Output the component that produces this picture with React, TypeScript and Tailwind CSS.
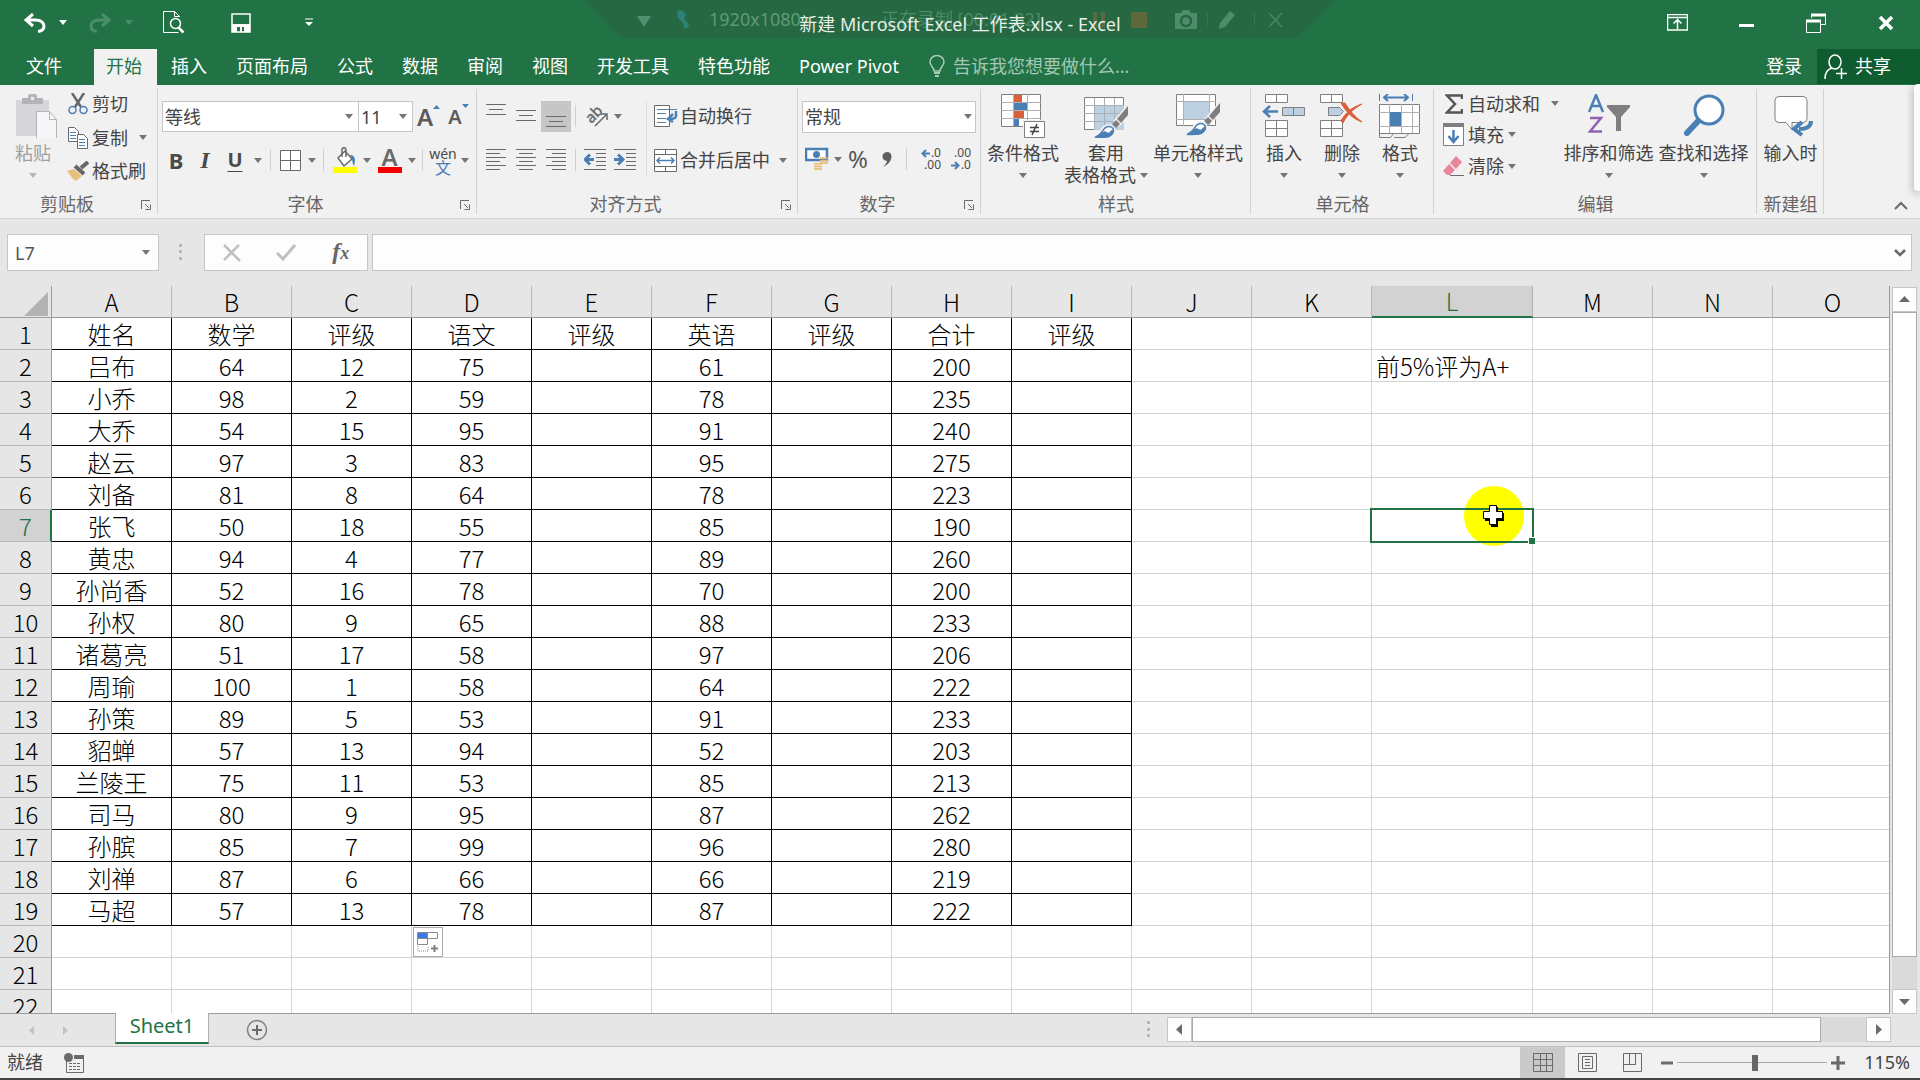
import React from 'react';
import clsx from 'clsx';

const HEADERS = ['姓名', '数学', '评级', '语文', '评级', '英语', '评级', '合计', '评级'];

const STUDENTS: (string | number)[][] = [
  ['吕布', 64, 12, 75, '', 61, '', 200, ''],
  ['小乔', 98, 2, 59, '', 78, '', 235, ''],
  ['大乔', 54, 15, 95, '', 91, '', 240, ''],
  ['赵云', 97, 3, 83, '', 95, '', 275, ''],
  ['刘备', 81, 8, 64, '', 78, '', 223, ''],
  ['张飞', 50, 18, 55, '', 85, '', 190, ''],
  ['黄忠', 94, 4, 77, '', 89, '', 260, ''],
  ['孙尚香', 52, 16, 78, '', 70, '', 200, ''],
  ['孙权', 80, 9, 65, '', 88, '', 233, ''],
  ['诸葛亮', 51, 17, 58, '', 97, '', 206, ''],
  ['周瑜', 100, 1, 58, '', 64, '', 222, ''],
  ['孙策', 89, 5, 53, '', 91, '', 233, ''],
  ['貂蝉', 57, 13, 94, '', 52, '', 203, ''],
  ['兰陵王', 75, 11, 53, '', 85, '', 213, ''],
  ['司马', 80, 9, 95, '', 87, '', 262, ''],
  ['孙膑', 85, 7, 99, '', 96, '', 280, ''],
  ['刘禅', 87, 6, 66, '', 66, '', 219, ''],
  ['马超', 57, 13, 78, '', 87, '', 222, ''],
];

const ROWS = [HEADERS, ...STUDENTS];
const COLUMNS = 'ABCDEFGHIJKLMNO'.split('');
const ROW_COUNT = 22;
const TABS = ['插入', '页面布局', '公式', '数据', '审阅', '视图', '开发工具', '特色功能', 'Power Pivot'];

const GRAY = '#6a6a6a';
const BLUE = '#4a7fb5';

interface IconProps {
  w: number;
  h: number;
  children: React.ReactNode;
  className?: string;
}

const Icon: React.FC<IconProps> = ({ w, h, children, className }) => (
  <svg width={w} height={h} viewBox={`0 0 ${w} ${h}`} fill="none" className={clsx('shrink-0', className)} aria-hidden="true">
    {children}
  </svg>
);

const Caret: React.FC<{ color?: string; className?: string }> = ({ color = '#757575', className }) => (
  <Icon w={8} h={5} className={className}>
    <path d="M0 0h8L4 5z" fill={color} />
  </Icon>
);

const CaretButton: React.FC<{ label: string; className?: string }> = ({ label, className }) => (
  <button aria-label={label} className={clsx('flex h-7 items-center justify-center', className ?? 'w-3')}>
    <Caret />
  </button>
);

const Separator: React.FC = () => (
  <div className="flex w-[9px] justify-center">
    <div className="h-[22px] w-px bg-[#d0d0d0]" />
  </div>
);

/* horizontal text lines used by all the alignment buttons */
const Lines: React.FC<{ lines: [number, number][]; start: number; step: number }> = ({ lines, start, step }) => (
  <Icon w={20} h={24}>
    {lines.map(([a, b], i) => (
      <path key={i} d={`M${a} ${start + i * step + 0.5}H${b}`} stroke={GRAY} />
    ))}
  </Icon>
);

interface GroupProps {
  title: string;
  width: string;
  launcher?: boolean;
  children: React.ReactNode;
}

const Group: React.FC<GroupProps> = ({ title, width, launcher, children }) => (
  <section className={clsx('relative flex shrink-0 flex-col', width)}>
    <div className="flex h-[106px]">{children}</div>
    <div className={clsx('flex h-7 items-center justify-center text-[#666]', launcher && 'pr-6')}>{title}</div>
    {launcher && (
      <button aria-label={`${title}设置`} className="absolute right-[7px] bottom-2">
        <Icon w={10} h={10}>
          <path d="M.5 9V.5H9M4 4l4 4M9.500 4.500v5h-5" stroke={GRAY} />
        </Icon>
      </button>
    )}
    <div className="absolute top-1 right-0 bottom-1 w-px bg-[#d2d2d2]" />
  </section>
);

interface BigButtonProps {
  lines: string[];
  width: string;
  icon: React.ReactNode;
  disabled?: boolean;
  noCaret?: boolean;
}

const BigButton: React.FC<BigButtonProps> = ({ lines, width, icon, disabled, noCaret }) => (
  <button
    disabled={disabled}
    className={clsx('flex shrink-0 flex-col items-center pt-[9px] whitespace-nowrap', width, disabled && 'text-[#a0a0a0]')}
  >
    {icon}
    <span className="mt-1">{lines[0]}</span>
    <span className="flex h-[22px] items-center gap-1">
      {lines[1]}
      {!noCaret && <Caret color={disabled ? '#b5b5b5' : undefined} />}
    </span>
  </button>
);

const SmallButton: React.FC<{ label: string; icon: React.ReactNode; caret?: string }> = ({ label, icon, caret }) => (
  <button className="flex h-full items-center gap-[3px] whitespace-nowrap">
    <span className="flex w-[23px] justify-center">{icon}</span>
    {label}
    {caret && <Caret className={caret} />}
  </button>
);

const Brush: React.FC = () => (
  <>
    <path d="M45 9v13L35 33l-6-6z" fill="#f0f0f0" />
    <path d="M44 12v9l-7 8-4-4z" fill="#7f7f7f" />
    <path d="M32 26l4 4-4 4-4-4z" fill="#7f7f7f" />
    <path d="M11 44c4-2 5-4 7-8 2-4 7-6 10-3 4 3 2 8-3 10-4 2-9 1-14 1z" fill="#f0f0f0" stroke="#f0f0f0" strokeWidth="3" />
    <path d="M11 43.500c5-2 6-4 8-7 2-4 6-5 9-3 3 3 1 7-3 9-4 1-9 1-14 1z" fill="#fff" stroke={BLUE} strokeWidth="1.500" />
    <path d="M11 43.500c5-2 6-5 9-6 2-1 3 2 5 1s3-4 4-2-1 4-4 6c-4 2-9 1-14 1z" fill={BLUE} />
  </>
);

const TitleBar: React.FC = () => (
  <header className="relative flex h-[49px] items-center justify-between">
    <div className="absolute inset-x-0 top-0 flex justify-center overflow-hidden">
      <div className="relative flex h-[38px] w-[750px] items-center text-[#5f9a79]">
        <svg viewBox="0 0 750 38" className="absolute inset-0 h-full w-full" aria-hidden="true">
          <path d="M0 0h750l-38 37.500H35z" fill="#256842" />
          <path d="M52 16h14l-7 11z" fill="#4f9270" />
          <path d="M92 11l5-1 4 4-2 5 5 5-1 4h-4l-1-5-5-5z" fill="#2c8276" />
          <path d="M508 12h4v16h-4zM516 12h4v16h-4z" fill="#5b6a3d" />
          <path d="M546 12h16v16h-16z" fill="#5f683c" />
          <path d="M590 13h6l2-3h6l2 3h6v16h-22z" fill="#4f8c6b" />
          <circle cx="601" cy="21" r="5" fill="#4f8c6b" stroke="#256842" strokeWidth="2.500" />
          <path d="M634 29l1-6 10-12 5 4-10 12z" fill="#4f8c6b" />
          <path d="M622.500 13v13M669.500 13v13" stroke="#347650" />
          <path d="M684 13l13 14M697 13l-13 14" stroke="#468663" strokeWidth="1.500" />
        </svg>
        <span className="relative ml-[124px]">1920x1080</span>
        <span className="relative ml-20 text-[#4c8a68]">正在录制 [00:01:32]</span>
      </div>
    </div>
    <h1 className="absolute inset-x-0 top-[13px] text-center text-[#e6efe9]">新建 Microsoft Excel 工作表.xlsx - Excel</h1>

    <div className="relative flex items-center pl-6 pb-1">
      <button aria-label="撤消">
        <Icon w={22} h={20}>
          <path d="M2 7h10c5 0 8 3 8 6s-2 5-6 5.500M9 1L2 7l7 6" stroke="#fff" strokeWidth="3" />
        </Icon>
      </button>
      <button aria-label="撤消列表" className="ml-[13px]">
        <Caret color="#fff" />
      </button>
      <button aria-label="恢复" className="ml-[22px]" disabled>
        <Icon w={22} h={20}>
          <path d="M20 7H10c-5 0-8 3-8 6s2 5 6 5.500M13 1l7 6-7 6" stroke="#4b8f69" strokeWidth="3" />
        </Icon>
      </button>
      <button aria-label="恢复列表" className="ml-3.5" disabled>
        <Caret color="#4b8f69" />
      </button>
      <button aria-label="打印预览" className="ml-[30px]">
        <Icon w={22} h={23}>
          <path d="M16.500 6V5.500L11.500.5H.5v21h15M11.500.5v5h5" stroke="#fff" />
          <circle cx="12.500" cy="12.500" r="5" stroke="#fff" strokeWidth="1.500" />
          <path d="M15.500 16.500l5 5" stroke="#fff" strokeWidth="2.500" />
        </Icon>
      </button>
      <button aria-label="保存" className="ml-[46px]">
        <Icon w={20} h={20}>
          <path d="M1 1h18v18H1z" stroke="#fff" strokeWidth="1.500" />
          <path d="M1 11h18v8h-6v-5h-2v5H9v-5H6v5H1z" fill="#fff" />
        </Icon>
      </button>
      <button aria-label="自定义快速访问工具栏" className="ml-[54px]">
        <Icon w={8} h={9}>
          <path d="M0 1h8" stroke="#fff" />
          <path d="M0 4h8L4 8z" fill="#fff" />
        </Icon>
      </button>
    </div>

    <div className="relative flex items-center pr-[26px] pb-1">
      <button aria-label="功能区显示选项" className="mr-[51px]">
        <Icon w={21} h={17}>
          <path d="M.5.5h20v15.500H.5zM.5 3.500h20M10.500 15V6M6.500 9.500l4-4 4 4" stroke="#fff" strokeWidth="1.500" />
        </Icon>
      </button>
      <button aria-label="最小化" className="mr-[52px]">
        <Icon w={15} h={8}>
          <path d="M0 6.500h15" stroke="#fff" strokeWidth="3" />
        </Icon>
      </button>
      <button aria-label="向下还原" className="mr-[52px]">
        <Icon w={20} h={20}>
          <path d="M5.500 5V1.500h14v10H15M.5 8.500h14v11H.5z" stroke="#fff" />
          <path d="M5 2h15M0 8h15" stroke="#fff" strokeWidth="3" />
        </Icon>
      </button>
      <button aria-label="关闭">
        <Icon w={16} h={16}>
          <path d="M2 2l12 12M14 2L2 14" stroke="#fff" strokeWidth="3.500" />
        </Icon>
      </button>
    </div>
  </header>
);

const TabBar: React.FC = () => (
  <nav className="flex h-9 items-stretch whitespace-nowrap text-white">
    <button className="w-[94px] pr-1.5 pb-0.5">文件</button>
    <button className="bg-[#f1f1f1] pr-[15px] pb-0.5 pl-3 text-[#217346]">开始</button>
    <div className="flex gap-px">
      {TABS.map((tab) => (
        <button key={tab} className="px-3.5 pb-0.5">
          {tab}
        </button>
      ))}
    </div>
    <label className="ml-4 flex flex-1 items-center gap-2 pb-0.5">
      <Icon w={16} h={22}>
        <path d="M5 16c0-4-4-5-4-9a7 6.500 0 0114 0c0 4-4 5-4 9z" stroke="#a9cbb8" strokeWidth="1.500" />
        <path d="M5 18h6M6 21h4" stroke="#a9cbb8" strokeWidth="2" />
      </Icon>
      <input
        aria-label="告诉我您想要做什么"
        placeholder="告诉我您想要做什么..."
        className="w-60 bg-transparent outline-none placeholder:text-[#a3c7b2]"
      />
    </label>
    <button className="px-[15px] pb-0.5">登录</button>
    <button className="mb-px flex w-[103px] items-center gap-2 bg-[#0e5c2f] pb-px pl-[7px]">
      <Icon w={23} h={25}>
        <ellipse cx="11" cy="8" rx="6" ry="7" stroke="#fff" strokeWidth="1.500" />
        <path d="M1 25c0-6 3-10 7-11M12 19.500h11M17.500 14v11" stroke="#fff" strokeWidth="1.500" />
      </Icon>
      共享
    </button>
  </nav>
);

const ClipboardGroup: React.FC = () => (
  <Group title="剪贴板" width="w-[158px]" launcher>
    <BigButton
      lines={['粘贴']}
      width="w-[66px]"
      disabled
      icon={
        <Icon w={42} h={44} className="ml-2">
          <path d="M0 6h33v36H0z" fill="#d6d6da" />
          <path d="M6 10V4h6V2a2 2 0 012-2h5a2 2 0 012 2v2h6v6z" fill="#b4b4b8" />
          <path d="M15 3h3v3h-3z" fill="#f0f0f0" />
          <path d="M20.500 17.500h13l7 8v19h-20z" fill="#f8f6f8" stroke="#b4b4b8" />
          <path d="M33.500 17.500v8h7" stroke="#b4b4b8" />
        </Icon>
      }
    />
    <div className="grid h-full grid-rows-3 pt-0.5 pb-0.5">
      <SmallButton
        label="剪切"
        icon={
          <Icon w={20} h={22}>
            <path d="M4 0l9 14M16 0L7 14" stroke="#666" strokeWidth="2.500" />
            <circle cx="4.500" cy="17" r="3.500" stroke={BLUE} strokeWidth="1.500" />
            <circle cx="15.500" cy="17" r="3.500" stroke={BLUE} strokeWidth="1.500" />
          </Icon>
        }
      />
      <SmallButton
        label="复制"
        caret="ml-2"
        icon={
          <Icon w={20} h={22}>
            <path d="M.5.5h6l4 4v10H.5z" fill="#fff" stroke={GRAY} />
            <path d="M2 5.500h6M2 8.500h6M2 11.500h6" stroke={BLUE} />
            <path d="M9.500 7.500h6l4 4v10h-10z" fill="#fff" stroke={GRAY} />
            <path d="M11 12.500h6M11 15.500h6M11 18.500h6" stroke={BLUE} />
          </Icon>
        }
      />
      <SmallButton
        label="格式刷"
        icon={
          <Icon w={22} h={20}>
            <path d="M0 10l7-2 8 7-6 5-3-2z" fill="#e8c07d" />
            <path d="M8 5l9 8" stroke="#666" strokeWidth="4" />
            <path d="M14 7l7-6" stroke="#666" strokeWidth="4" />
          </Icon>
        }
      />
    </div>
  </Group>
);

const FontGroup: React.FC = () => (
  <Group title="字体" width="w-[319px]" launcher>
    <div className="flex flex-col gap-3 pt-4 pl-1">
      <div className="flex items-center">
        <div className="relative">
          <select aria-label="字体" className="h-[31px] w-[197px] appearance-none border border-[#c6c6c6] bg-white pl-0.5">
            <option>等线</option>
          </select>
          <Caret className="pointer-events-none absolute top-[13px] right-1.5" />
        </div>
        <div className="relative">
          <select aria-label="字号" className="h-[31px] w-[54px] appearance-none border border-l-0 border-[#c6c6c6] bg-white pl-0.5">
            <option>11</option>
          </select>
          <Caret className="pointer-events-none absolute top-[13px] right-1.5" />
        </div>
        <button aria-label="增大字号" className="ml-1 flex items-start">
          <span className="text-2xl leading-6 font-semibold text-[#5c5c5c]">A</span>
          <Icon w={7} h={4}>
            <path d="M0 4h7L3.500 0z" fill={BLUE} />
          </Icon>
        </button>
        <button aria-label="减小字号" className="ml-2 flex items-start">
          <span className="pt-px text-xl leading-6 font-semibold text-[#5c5c5c]">A</span>
          <Icon w={7} h={4}>
            <path d="M0 0h7L3.500 4z" fill={BLUE} />
          </Icon>
        </button>
      </div>
      <div className="flex items-center">
        <button className="w-7 text-[22px] font-bold text-[#4a4a4a]">B</button>
        <button className="w-[30px] font-['Liberation_Serif',serif] text-[24px] font-bold text-[#4a4a4a] italic">I</button>
        <button className="w-[30px] text-xl font-bold text-[#4a4a4a] underline decoration-1 underline-offset-4">U</button>
        <CaretButton label="下划线样式" className="w-4" />
        <Separator />
        <button aria-label="边框" className="flex w-[30px] justify-center">
          <Icon w={21} h={21}>
            <path d="M.5.5h20v20H.5zM10.500 0v21M0 10.500h21" fill="#fff" stroke={GRAY} />
          </Icon>
        </button>
        <CaretButton label="边框样式" className="w-3.5" />
        <Separator />
        <button aria-label="填充颜色" className="flex w-[33px] justify-center">
          <Icon w={24} h={26}>
            <path d="M5 11l7-7 7 8-8 7z" fill="#fff" stroke={GRAY} strokeWidth="1.500" />
            <path d="M9 10V3c0-3 4-3 4 0v7" stroke={GRAY} strokeWidth="1.500" />
            <path d="M17 8c5 0 6 4 4 11-2-3-1-7-4-11z" fill={BLUE} />
            <path d="M0 20h24v6H0z" fill="#ff0" />
          </Icon>
        </button>
        <CaretButton label="填充颜色列表" />
        <button aria-label="字体颜色" className="flex w-[33px] flex-col items-center">
          <span className="text-2xl leading-5 font-semibold text-[#6a6a6a]">A</span>
          <span className="h-1.5 w-6 bg-[#f00000]" />
        </button>
        <CaretButton label="字体颜色列表" />
        <Separator />
        <button aria-label="拼音指南" className="flex w-8 flex-col items-center pt-1">
          <span className="text-sm leading-3 text-[#4a4a4a]">wén</span>
          <span className="text-base leading-4 text-[#4a7fb5]">文</span>
        </button>
        <CaretButton label="拼音选项" />
      </div>
    </div>
  </Group>
);

const AlignGroup: React.FC = () => (
  <Group title="对齐方式" width="w-[321px]" launcher>
    <div className="grid h-[97px] w-[165px] grid-rows-2 pt-[9px] pl-1">
      <div className="flex items-center">
        <button aria-label="顶端对齐" className="flex w-[30px] justify-center">
          <Lines lines={[[0, 20], [3, 17], [0, 20]]} start={0} step={5} />
        </button>
        <button aria-label="垂直居中" className="flex w-[30px] justify-center">
          <Lines lines={[[0, 20], [3, 17], [0, 20]]} start={6} step={5} />
        </button>
        <button aria-label="底端对齐" className="flex h-[31px] w-[30px] items-center justify-center bg-[#c6c6c6]">
          <Lines lines={[[0, 20], [3, 17], [0, 20]]} start={12} step={5} />
        </button>
        <Separator />
        <button aria-label="方向" className="ml-1 flex w-7 justify-center">
          <Icon w={24} h={22}>
            <text x="1" y="15" fontSize="15" fill={GRAY} stroke={GRAY} strokeWidth=".5" transform="rotate(-45 8 12)">
              ab
            </text>
            <path d="M9 21L20 10M15 9h6v6" stroke={GRAY} strokeWidth="1.500" />
          </Icon>
        </button>
        <CaretButton label="方向列表" />
      </div>
      <div className="flex items-center">
        <button aria-label="左对齐" className="flex w-[30px] justify-center">
          <Lines lines={[[0, 20], [0, 14], [0, 20], [0, 14], [0, 20], [0, 14]]} start={1} step={4} />
        </button>
        <button aria-label="居中" className="flex w-[30px] justify-center">
          <Lines lines={[[0, 20], [3, 17], [0, 20], [3, 17], [0, 20], [3, 17]]} start={1} step={4} />
        </button>
        <button aria-label="右对齐" className="flex w-[30px] justify-center">
          <Lines lines={[[0, 20], [6, 20], [0, 20], [6, 20], [0, 20], [6, 20]]} start={1} step={4} />
        </button>
        <Separator />
        <button aria-label="减少缩进量" className="flex w-[30px] justify-center">
          <Icon w={22} h={22}>
            <path d="M0 .5h22M12 4.500h10M12 8.500h10M12 12.500h10M12 16.500h10M0 20.500h22" stroke={GRAY} />
            <path d="M2 10.500h8M6 5.500l-5 5 5 5" stroke={BLUE} strokeWidth="3" />
          </Icon>
        </button>
        <button aria-label="增加缩进量" className="flex w-[30px] justify-center">
          <Icon w={22} h={22}>
            <path d="M0 .5h22M12 4.500h10M12 8.500h10M12 12.500h10M12 16.500h10M0 20.500h22" stroke={GRAY} />
            <path d="M0 10.500h8M4 5.500l5 5-5 5" stroke={BLUE} strokeWidth="3" />
          </Icon>
        </button>
      </div>
    </div>
    <div className="mt-4 ml-1 h-[76px] w-px bg-[#dedede]" />
    <div className="grid h-[97px] grid-rows-2 pt-[9px] pl-[7px]">
      <SmallButton
        label="自动换行"
        icon={
          <Icon w={24} h={23}>
            <path d="M.5.5h15v21H.5z" fill="#fff" stroke={GRAY} />
            <path d="M3 4.500h20M3 8.500h9M3 13.500h9M3 17.500h9" stroke="#5f7f9f" />
            <path d="M22 6v5c0 2-2 3-7 3M19 9l-5 5 5 3" stroke={BLUE} strokeWidth="2.500" />
          </Icon>
        }
      />
      <SmallButton
        label="合并后居中"
        caret="ml-1.5"
        icon={
          <Icon w={23} h={23}>
            <path d="M.5.5h22v22H.5zM.5 5.500h22M.5 17.500h22M11.500 0v5M11.500 18v5" fill="#fff" stroke={GRAY} />
            <path d="M3 11.500h17M6 8.500l-3 3 3 3M17 8.500l3 3-3 3" stroke={BLUE} strokeWidth="1.500" />
          </Icon>
        }
      />
    </div>
  </Group>
);

const NumberGroup: React.FC = () => (
  <Group title="数字" width="w-[183px]" launcher>
    <div className="flex w-[178px] flex-col gap-3 pt-4 pl-1">
      <div className="relative">
        <select aria-label="数字格式" className="h-8 w-full appearance-none border border-[#c6c6c6] bg-white pl-0.5">
          <option>常规</option>
        </select>
        <Caret className="pointer-events-none absolute top-[13px] right-1" />
      </div>
      <div className="flex items-center">
        <button aria-label="会计数字格式" className="flex w-[30px] shrink-0 justify-center">
          <Icon w={24} h={24}>
            <path d="M1 2h21v11H1z" fill="#fff" stroke={BLUE} strokeWidth="2.500" />
            <circle cx="11.500" cy="7.500" r="3.500" fill={BLUE} />
            <path d="M15 11h8M15 13.500h8M15 16h8M9 17h8M9 19.500h8M9 22h8" stroke="#e8b86a" strokeWidth="1.500" />
          </Icon>
        </button>
        <CaretButton label="货币列表" />
        <button className="w-7 shrink-0 text-[24px] leading-7 text-[#555]">%</button>
        <button aria-label="千位分隔样式" className="flex w-[30px] shrink-0 justify-center">
          <Icon w={10} h={15}>
            <path d="M5 0c7 0 6 11-4 15 3-3 4-5 4-6C-1 9-1 0 5 0z" fill="#5f5f5f" />
          </Icon>
        </button>
        <Separator />
        <button aria-label="增加小数位数" className="flex w-[30px] shrink-0 flex-col items-end text-xs leading-3 text-[#4a4a4a]">
          <span className="flex items-center gap-px">
            <Icon w={9} h={9}>
              <path d="M1 4.500h8M5 1L1.500 4.500 5 8" stroke={BLUE} strokeWidth="2" />
            </Icon>
            .0
          </span>
          <span>.00</span>
        </button>
        <button aria-label="减少小数位数" className="flex w-[30px] shrink-0 flex-col items-end text-xs leading-3 text-[#4a4a4a]">
          <span>.00</span>
          <span className="flex items-center gap-px">
            <Icon w={9} h={9}>
              <path d="M0 4.500h8M4 1l3.500 3.500L4 8" stroke={BLUE} strokeWidth="2" />
            </Icon>
            .0
          </span>
        </button>
      </div>
    </div>
  </Group>
);

const StylesGroup: React.FC = () => (
  <Group title="样式" width="w-[270px]">
    <BigButton
      lines={['条件格式']}
      width="ml-0.5 w-20"
      icon={
        <Icon w={44} h={44}>
          <path d="M.5.5h39v32H.5z" fill="#fff" stroke="#7f7f7f" />
          <path d="M0 8.500h40M0 16.500h40M0 24.500h40M12.500 0v32M26.500 0v32" stroke="#b0b0b0" />
          <path d="M13 1h8v7h-8zM13 17h10v7H13z" fill="#d9603b" />
          <path d="M13 9h13v7H13zM13 25h5v7h-5z" fill={BLUE} />
          <path d="M22 26h22v18H22z" fill="#f0f0f0" />
          <path d="M23.500 27.500h20v16h-20z" fill="#fff" stroke="#7f7f7f" />
          <path d="M29 33.500h9M29 37.500h9M36 30l-5 11" stroke="#444" strokeWidth="1.500" />
        </Icon>
      }
    />
    <BigButton
      lines={['套用', '表格格式']}
      width="w-[86px]"
      icon={
        <Icon w={45} h={44}>
          <path d="M.5 3.500h39v32H.5z" fill="#fff" stroke="#7f7f7f" />
          <path d="M10 12h30v24H10z" fill="#bdd0e2" />
          <path d="M0 11.500h40M0 19.500h40M0 27.500h40M10.500 4v32M20.500 4v32M30.500 4v32" stroke="#a8b0b8" />
          <Brush />
        </Icon>
      }
    />
    <BigButton
      lines={['单元格样式']}
      width="w-[98px]"
      icon={
        <Icon w={45} h={44}>
          <path d="M.5.5h39v31H.5z" fill="#fff" stroke="#7f7f7f" />
          <path d="M0 7.500h40M0 25.500h40M7.500 0v32M33.500 0v32" stroke="#b0b0b0" />
          <path d="M8 8h25v17H8z" fill="#bdd0e2" />
          <g transform="translate(0 -3)">
            <Brush />
          </g>
        </Icon>
      }
    />
  </Group>
);

const CellsGroup: React.FC = () => (
  <Group title="单元格" width="w-[183px]">
    <BigButton
      lines={['插入']}
      width="ml-1 w-[58px]"
      icon={
        <Icon w={44} h={44}>
          <path d="M3.500.5h22v8h-22zM14.500 0v9M3.500 26.500h22v16h-22zM3.500 34.500h22M14.500 26v17" fill="#fff" stroke="#7f7f7f" />
          <path d="M20.500 13.500h22v8h-22zM31.500 13v9" fill="#bdd0e2" stroke="#7f7f7f" />
          <path d="M2 17.500h14M8 12l-6 5.500 6 5.500" stroke={BLUE} strokeWidth="2.500" />
        </Icon>
      }
    />
    <BigButton
      lines={['删除']}
      width="w-[58px]"
      icon={
        <Icon w={44} h={44}>
          <path d="M.5.5h22v8H.5zM11.500 0v9M.5 26.500h22v16H.5zM.5 34.500h22M11.500 26v17" fill="#fff" stroke="#7f7f7f" />
          <path d="M8.500 13.500h11l4 4-4 4h-11z" fill="#bdd0e2" stroke="#7f7f7f" />
          <path d="M21 9l4 0c5 8 10 14 17 19-9-3-16-10-21-19z" fill="#d9603b" stroke="#d9603b" />
          <path d="M42 10C33 15 27 21 23 29l-2-2c4-8 11-14 21-17z" fill="#d9603b" stroke="#d9603b" />
        </Icon>
      }
    />
    <BigButton
      lines={['格式']}
      width="w-[58px]"
      icon={
        <Icon w={42} h={44}>
          <path d="M.5 10.500h40v29H.5z" fill="#fff" stroke="#7f7f7f" />
          <path d="M10.500 10v29M22.500 10v29M33.500 10v29M0 18.500h41M0 32.500h41" stroke="#b0b0b0" />
          <path d="M11 18h11v14H11z" fill={BLUE} />
          <path d="M.5 0v7M33.500 0v7" stroke={BLUE} />
          <path d="M5 3.500h24M9 0L5 3.500 9 7M25 0l4 3.500L25 7" stroke={BLUE} strokeWidth="2" />
          <path d="M.5 39v4.500h11l3-4M15 43.500h11l4-4" stroke="#7f7f7f" />
        </Icon>
      }
    />
  </Group>
);

const EditGroup: React.FC = () => (
  <Group title="编辑" width="w-[323px]">
    <div className="grid h-[97px] w-[127px] grid-rows-3 pt-[3px] pl-2">
      <SmallButton
        label="自动求和"
        caret="ml-2"
        icon={
          <Icon w={18} h={20}>
            <path d="M17 5V1.500H2L10 10l-8 8.500h15V15" stroke="#555" strokeWidth="2.500" />
          </Icon>
        }
      />
      <SmallButton
        label="填充"
        caret="ml-px"
        icon={
          <Icon w={21} h={23}>
            <path d="M.5.5h20v22H.5z" fill="#fff" stroke="#7f7f7f" />
            <path d="M0 0h21v4H0z" fill="#7f7f7f" />
            <path d="M10.500 7v12M5.500 13l5 6 5-6" stroke={BLUE} strokeWidth="2.500" />
          </Icon>
        }
      />
      <SmallButton
        label="清除"
        caret="ml-px"
        icon={
          <Icon w={21} h={20}>
            <path d="M13 0l6 6-6 7-6-6z" fill="#e8879b" />
            <path d="M6 8l6 6-5 5H4l-4-4z" fill="#e8879b" />
            <path d="M7 19.500h14" stroke={GRAY} />
          </Icon>
        }
      />
    </div>
    <BigButton
      lines={['排序和筛选']}
      width="w-[95px]"
      icon={
        <Icon w={42} h={44}>
          <path d="M1 18L8 1l7 17M4 12h8" stroke={BLUE} strokeWidth="2.500" />
          <path d="M2 24h11L2 37.500h12" stroke="#8e62b0" strokeWidth="2.500" />
          <path d="M19 11h23v2l-9 10v14h-5V23l-9-10z" fill="#7f7f7f" />
        </Icon>
      }
    />
    <BigButton
      lines={['查找和选择']}
      width="w-[95px]"
      icon={
        <Icon w={42} h={44}>
          <path d="M4 39l13-14" stroke={BLUE} strokeWidth="6" strokeLinecap="round" />
          <circle cx="26" cy="16" r="14" fill="#fff" stroke={BLUE} strokeWidth="3" />
        </Icon>
      }
    />
  </Group>
);

const Ribbon: React.FC = () => (
  <div className="relative flex h-[134px] shrink-0 border-b border-[#d2d2d2] bg-[#f1f1f1] text-[#444]">
    <ClipboardGroup />
    <FontGroup />
    <AlignGroup />
    <NumberGroup />
    <StylesGroup />
    <CellsGroup />
    <EditGroup />
    <Group title="新建组" width="w-[67px]">
      <BigButton
        lines={['输入时']}
        width="w-full"
        noCaret
        icon={
          <Icon w={40} h={44} className="ml-1">
            <path d="M6 2.500h24a4 4 0 014 4v18a4 4 0 01-4 4H19v7l-6-7H6a4 4 0 01-4-4v-18a4 4 0 014-4z" fill="#fff" stroke="#7f7f7f" />
            <path d="M38 27c0 5-4 8-12 8M29 28l-8 7 8 6" stroke={BLUE} strokeWidth="4" />
          </Icon>
        }
      />
    </Group>
    <div className="flex flex-1 items-end justify-end pr-3 pb-2">
      <button aria-label="折叠功能区">
        <Icon w={14} h={9}>
          <path d="M1 8l6-6 6 6" stroke={GRAY} strokeWidth="2" />
        </Icon>
      </button>
    </div>
    <div className="absolute -top-px right-0 h-[107px] w-1.5 rounded-l-sm bg-[#f8fcfd] shadow-[0_2px_8px_rgba(0,0,0,0.35)]" />
  </div>
);

const FormulaBar: React.FC = () => (
  <div className="flex h-[67px] shrink-0 items-start pt-[15px] pr-2 pl-[7px]">
    <div className="relative">
      <input aria-label="名称框" defaultValue="L7" className="h-[37px] w-[152px] border border-[#c6c6c6] bg-[#fdfdfd] px-[7px] text-[#555] outline-none" />
      <Caret className="absolute top-4 right-[9px]" />
    </div>
    <Icon w={3} h={17} className="mx-5 mt-2.5">
      <path d="M0 0h3v3H0zM0 6h3v3H0zM0 13h3v3H0z" fill="#b5b5b5" />
    </Icon>
    <div className="ml-0.5 flex h-[37px] w-[164px] items-center justify-around border border-[#c6c6c6] bg-[#fdfdfd]">
      <button aria-label="取消">
        <Icon w={18} h={18}>
          <path d="M1 1l16 16M16 1L1 16" stroke="#c0c0c0" strokeWidth="2.500" />
        </Icon>
      </button>
      <button aria-label="输入">
        <Icon w={20} h={17}>
          <path d="M1 9l6 6L19 1" stroke="#c0c0c0" strokeWidth="3" />
        </Icon>
      </button>
      <button aria-label="插入函数" className="font-['Liberation_Serif',serif] text-[24px] font-bold text-[#666] italic">
        f<span className="text-lg">x</span>
      </button>
    </div>
    <div className="relative ml-1 flex-1">
      <input aria-label="编辑栏" className="h-[37px] w-full border border-[#c6c6c6] bg-[#fdfdfd] px-2 outline-none" />
      <button aria-label="展开编辑栏" className="absolute top-[15px] right-1.5">
        <Icon w={12} h={9}>
          <path d="M1 1l5 5 5-5" stroke={GRAY} strokeWidth="2.500" />
        </Icon>
      </button>
    </div>
  </div>
);

const AutoFillButton: React.FC = () => (
  <button aria-label="自动填充选项" className="absolute top-px left-px border border-[#ababab] bg-white">
    <Icon w={28} h={28}>
      <path d="M3.500 4.500h20v6h-20zM3.500 10.500h10v6h-10zM13.500 4.500v6" stroke="#8a8a8a" />
      <path d="M4 5h9v5H4z" fill="#3d78e6" />
      <path d="M4 18v5h10v-5" stroke="#8a8a8a" strokeDasharray="1 1" />
      <path d="M17 20.500h7M20.500 17v7" stroke="#7f7f7f" strokeWidth="2" />
    </Icon>
  </button>
);

const Selection: React.FC = () => (
  <>
    <div className="absolute -top-6 left-[92px] z-10 h-[60px] w-[60px] rounded-full bg-[#ffff00]" />
    <div className="absolute -inset-0.5 z-20 border-2 border-[#217346]" />
    <div className="absolute -right-[3px] -bottom-[3px] z-20 h-[7px] w-[7px] border-t border-l border-white bg-[#217346]" />
    <Icon w={24} h={24} className="absolute -top-1.5 left-[110px] z-30">
      <path d="M9 3h7v6h6v8h-6v6H9v-6H3V9h6z" fill="#000" />
      <path d="M7.500 1.500h7v6h6v7h-6v6h-7v-6h-6v-7h6z" fill="#fff" stroke="#000" />
    </Icon>
  </>
);

const Grid: React.FC = () => (
  <div className="relative min-w-0 flex-1 overflow-hidden border-r border-b border-[#9c9c9c]">
    <div className="absolute inset-0 overflow-hidden">
      <table className="w-[1893px] table-fixed border-separate border-spacing-0 bg-white font-['Noto_Sans_CJK_SC',sans-serif] text-2xl leading-[31px] font-light text-black">
        <colgroup>
          <col className="w-[52px]" />
          {COLUMNS.map((c) => (
            <col key={c} className={c === 'L' ? 'w-[161px]' : 'w-[120px]'} />
          ))}
        </colgroup>
        <thead>
          <tr className="h-8">
            <th className="border-r border-b border-[#9c9c9c] bg-[#e6e6e6] p-0" aria-label="全选">
              <Icon w={24} h={24} className="mt-1 ml-6">
                <path d="M24 0v24H0z" fill="#b2b2b2" />
              </Icon>
            </th>
            {COLUMNS.map((c) => (
              <th
                key={c}
                scope="col"
                className={clsx(
                  'border-r p-0 font-light',
                  c === 'L'
                    ? 'border-b-2 border-r-[#b0b0b0] border-b-[#217346] bg-[#d2d2d2] leading-[30px] text-[#217346]'
                    : 'border-b border-r-[#b8b8b8] border-b-[#9c9c9c] bg-[#e6e6e6]',
                )}
              >
                {c}
              </th>
            ))}
          </tr>
        </thead>
        <tbody>
          {Array.from({ length: ROW_COUNT }, (_, r) => (
            <tr key={r} className="h-8">
              <th
                scope="row"
                className={clsx(
                  'border-b p-0 font-light',
                  r === 6
                    ? 'border-r-2 border-r-[#217346] border-b-[#b8b8b8] bg-[#d2d2d2] pl-px text-[#217346]'
                    : 'border-r border-r-[#9c9c9c] border-b-[#b8b8b8] bg-[#e6e6e6]',
                )}
              >
                {r + 1}
              </th>
              {COLUMNS.map((c, i) => {
                const filled = r < ROWS.length && i < HEADERS.length;
                const note = c === 'L' && r === 1;
                return (
                  <td
                    key={c}
                    className={clsx(
                      'relative border-r border-b p-0 whitespace-nowrap',
                      filled ? 'border-black' : 'border-[#d4d4d4]',
                      note ? 'pl-1' : 'text-center',
                    )}
                  >
                    {filled && ROWS[r][i]}
                    {note && '前5%评为A+'}
                    {c === 'L' && r === 6 && <Selection />}
                    {c === 'D' && r === 19 && <AutoFillButton />}
                  </td>
                );
              })}
            </tr>
          ))}
        </tbody>
      </table>
    </div>
  </div>
);

const ScrollButton: React.FC<{ label: string; path: string }> = ({ label, path }) => (
  <button aria-label={label} className="flex h-[25px] w-[25px] shrink-0 items-center justify-center border border-[#c6c6c6] bg-[#fdfdfd]">
    <Icon w={11} h={11}>
      <path d={path} fill="#6a6a6a" />
    </Icon>
  </button>
);

const SheetBar: React.FC = () => (
  <div className="flex h-[33px] shrink-0 border-b border-[#c0c0c0]">
    <div className="flex w-[115px] items-center gap-7 pl-[29px]">
      <button aria-label="上一个工作表">
        <Icon w={6} h={9}>
          <path d="M5 0v9L0 4.500z" fill="#c3c3c3" />
        </Icon>
      </button>
      <button aria-label="下一个工作表">
        <Icon w={6} h={9}>
          <path d="M0 0v9l5-4.500z" fill="#c3c3c3" />
        </Icon>
      </button>
    </div>
    <button className="relative -mt-px h-[31px] w-[94px] border-x border-b-2 border-x-[#b0b0b0] border-b-[#217346] bg-white pb-1 text-xl leading-[22px] text-[#217346]">
      Sheet1
    </button>
    <button aria-label="新工作表" className="ml-[37px]">
      <Icon w={22} h={22}>
        <circle cx="11" cy="11" r="9.500" stroke="#7f7f7f" strokeWidth="1.500" />
        <path d="M6 11h10M11 6v10" stroke={GRAY} strokeWidth="2" />
      </Icon>
    </button>
    <div className="flex min-w-0 flex-1 items-center justify-end pr-[29px] pb-0.5">
      <Icon w={3} h={17} className="mr-[17px]">
        <path d="M0 0h3v3H0zM0 7h3v3H0zM0 13h3v3H0z" fill="#b5b5b5" />
      </Icon>
      <div className="flex w-[724px] bg-[#dadada]">
        <ScrollButton label="向左滚动" path="M8 0v11L2 5.500z" />
        <div className="h-[25px] flex-1 border border-[#ababab] bg-white" />
        <div className="w-[45px]" />
        <ScrollButton label="向右滚动" path="M3 0v11l6-5.500z" />
      </div>
    </div>
  </div>
);

const StatusBar: React.FC = () => (
  <footer className="flex h-[33px] shrink-0 items-center border-b-2 border-[#444] bg-[#f1f1f1] text-[#444]">
    <span className="pb-0.5 pl-[7px]">就绪</span>
    <button aria-label="录制宏" className="ml-[21px]">
      <Icon w={21} h={20}>
        <path d="M2.500 5v14.500h17V3" stroke={GRAY} />
        <path d="M10 2h10v4H10z" fill={GRAY} />
        <circle cx="4.500" cy="4.500" r="4.500" fill={GRAY} />
        <path d="M5 10.500h12M5 13.500h12M5 16.500h12" stroke={GRAY} strokeDasharray="3 1" />
      </Icon>
    </button>
    <div className="ml-auto flex h-full items-center">
      <button aria-label="普通视图" className="flex h-full w-[45px] items-center justify-center bg-[#cacaca]">
        <Icon w={20} h={19}>
          <path d="M.5.5h19v18H.5zM7.500 0v19M13.500 0v19M0 6.500h20M0 12.500h20" stroke={GRAY} />
        </Icon>
      </button>
      <button aria-label="页面布局视图" className="flex h-full w-[45px] items-center justify-center">
        <Icon w={19} h={19}>
          <path d="M.5.5h18v18H.5zM4.500 3.500h10v12h-10zM7 6.500h5M7 9.500h5M7 12.500h5" stroke={GRAY} />
        </Icon>
      </button>
      <button aria-label="分页预览" className="flex h-full w-[45px] items-center justify-center">
        <Icon w={19} h={19}>
          <path d="M.5.5h18v18H.5zM6.500 0v11M12.500 0v11M0 11.500h13" stroke={GRAY} />
        </Icon>
      </button>
      <button aria-label="缩小" className="ml-1.5">
        <Icon w={12} h={12}>
          <path d="M0 6h12" stroke={GRAY} strokeWidth="3" />
        </Icon>
      </button>
      <input
        type="range"
        aria-label="显示比例"
        defaultValue={52}
        className="mx-1 h-4 w-[150px] appearance-none bg-[linear-gradient(#a8a8a8,#a8a8a8)] bg-[length:100%_1px] bg-center bg-no-repeat [&::-webkit-slider-thumb]:h-4 [&::-webkit-slider-thumb]:w-1.5 [&::-webkit-slider-thumb]:appearance-none [&::-webkit-slider-thumb]:bg-[#666]"
      />
      <button aria-label="放大">
        <Icon w={14} h={14}>
          <path d="M0 7h14M7 0v14" stroke={GRAY} strokeWidth="3" />
        </Icon>
      </button>
      <button className="w-[75px] pr-2.5 pb-0.5 text-right">115%</button>
    </div>
  </footer>
);

const App: React.FC = () => (
  <div className="flex h-screen w-full flex-col overflow-hidden bg-[#e6e6e6] font-['Noto_Sans','Noto_Sans_CJK_SC',sans-serif] text-lg leading-[22px]">
    <div className="shrink-0 bg-[#217346]">
      <TitleBar />
      <TabBar />
    </div>
    <Ribbon />
    <FormulaBar />
    <main className="flex min-h-0 flex-1">
      <Grid />
      <div className="mt-px mr-[3px] ml-0.5 flex w-[25px] shrink-0 flex-col bg-[#dadada]">
        <ScrollButton label="向上滚动" path="M0 8h11L5.500 2z" />
        <div className="flex-1 border border-[#ababab] bg-white" />
        <div className="h-8" />
        <ScrollButton label="向下滚动" path="M0 3h11L5.500 9z" />
      </div>
    </main>
    <SheetBar />
    <StatusBar />
  </div>
);

export default App;
